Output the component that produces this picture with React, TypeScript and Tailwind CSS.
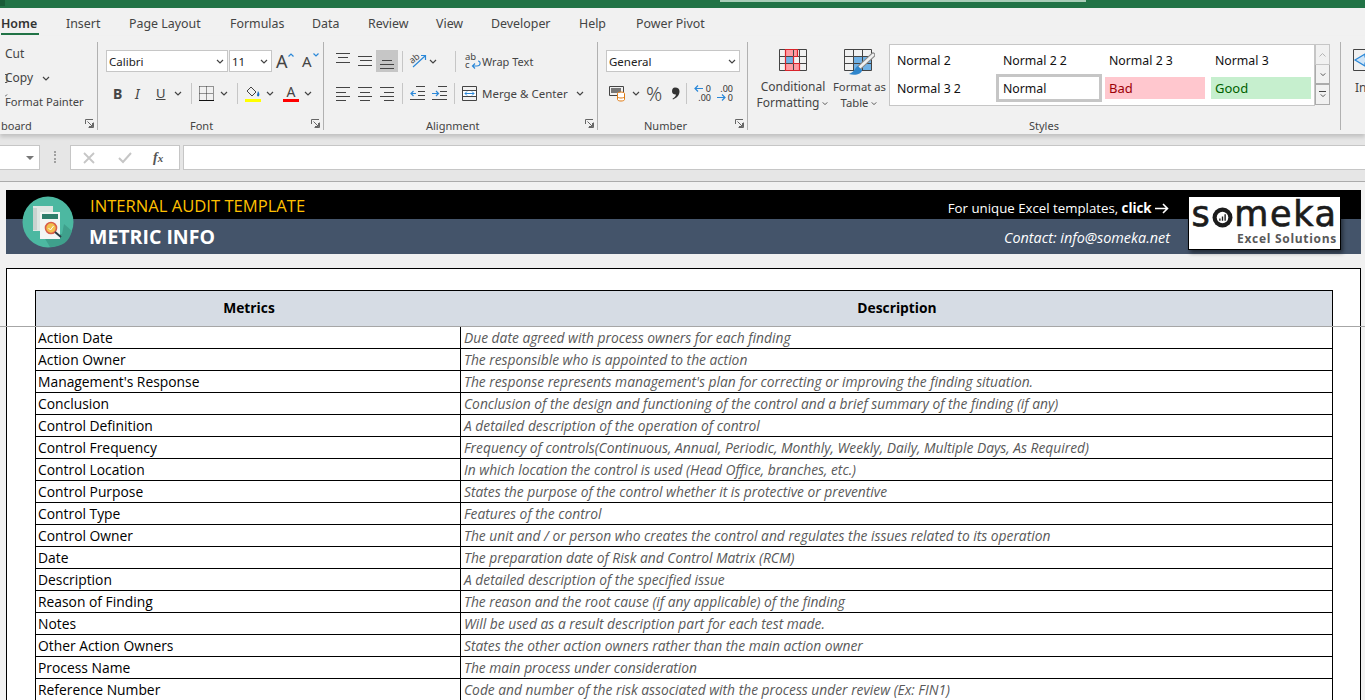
import React from "react";

const Chev = ({ className = "" }: { className?: string }) => (
  <svg width="8" height="5" viewBox="0 0 8 5" className={"shrink-0 " + className}>
    <path d="M1 1l3 3 3-3" fill="none" stroke="#444" strokeWidth="1.2" />
  </svg>
);

const Launcher = () => (
  <svg width="9" height="9" viewBox="0 0 9 9" className="absolute right-[3px] top-0">
    <path d="M.5 5V.5H8M8.5 3.5v5H3.5M2.5 2.5L7.5 7.5M4 7.5h3.5V4" fill="none" stroke="#666" strokeWidth="1" />
  </svg>
);

const Sep = ({ className = "" }: { className?: string }) => <div className={"w-px h-[21px] bg-[#c6c6c6] shrink-0 " + className} />;

const Lines = ({ ys, xs }: { ys: number[]; xs: [number, number][] }) => (
  <svg width="14" height="22" viewBox="0 0 14 22" className="shrink-0">
    {ys.map((y, i) => (
      <rect key={i} x={xs[i][0]} y={y} width={xs[i][1] - xs[i][0]} height="1" fill="#444" />
    ))}
  </svg>
);

const Group = ({ w, label, children, launcher = true, labelClass = "justify-center" }: { w: string; label: string; children: React.ReactNode; launcher?: boolean; labelClass?: string }) => (
  <div className={"relative h-[88px] my-[6px] border-r border-[#b1b1b1] shrink-0 flex flex-col " + w}>
    <div className="h-[77px] shrink-0">{children}</div>
    <div className={"relative flex shrink-0 h-[14px] mt-[0px] text-[11px] leading-[14px] text-[#444] " + labelClass}>
      {label}
      {launcher && <Launcher />}
    </div>
  </div>
);

const Combo = ({ w, text, className = "" }: { w: string; text: string; className?: string }) => (
  <div className={"h-[22px] bg-white border border-[#c6c6c6] flex items-center justify-between pl-[2px] pr-[3px] text-[11.5px] text-[#222] shrink-0 " + w + " " + className}>
    <span className="pt-[2px]">{text}</span>
    <Chev />
  </div>
);

const CFIcon = () => (
  <svg width="29" height="23" viewBox="0 0 29 23">
    <rect x="6" y=".5" width="12" height="7" fill="#ff9aa2" />
    <rect x="6" y="7.5" width="8" height="7" fill="#6fb1e6" />
    <rect x="6" y="14.5" width="14" height="7" fill="#ff9aa2" />
    <path d="M.5.5h27v21H.5zM.5 7.5h27M.5 14.5h27M6.5.5v21M20.5.5v21M14.5 .5v21" fill="none" stroke="#444" />
    <path d="M6.5.5h12v7h-4v7h6v7h-14z" fill="none" stroke="#d9242b" strokeWidth="1.2" />
  </svg>
);

const FTIcon = () => (
  <svg width="31" height="27" viewBox="0 0 31 27">
    <rect x="9" y="7" width="18" height="14" fill="#6fb1e6" />
    <path d="M.5.5h27v21H.5zM.5 7.5h27M.5 14.5h27M9.5.5v21M18.5.5v21" fill="none" stroke="#444" />
    <path d="M29 6L15 19" stroke="#8a8a8a" strokeWidth="5" strokeLinecap="round" />
    <path d="M29 6L15 19" stroke="#f0f0f0" strokeWidth="2.6" strokeLinecap="round" />
    <path d="M14 17c-3 1-3 6-9 8 6 2 13 0 13-4z" fill="#2f86cc" />
  </svg>
);

const StyleCell = ({ children, className = "" }: { children: React.ReactNode; className?: string }) => (
  <div className={"h-[28px] flex items-center text-[12.3px] pt-[2px] shrink-0 " + className}>{children}</div>
);

const rows: [string, string][] = [
  ["Action Date", "Due date agreed with process owners for each finding"],
  ["Action Owner", "The responsible who is appointed to the action"],
  ["Management's Response", "The response represents management's plan for correcting or improving the finding situation."],
  ["Conclusion", "Conclusion of the design and functioning of the control and a brief summary of the finding (if any)"],
  ["Control Definition", "A detailed description of the operation of control"],
  ["Control Frequency", "Frequency of controls(Continuous, Annual, Periodic, Monthly, Weekly, Daily, Multiple Days, As Required)"],
  ["Control Location", "In which location the control is used (Head Office, branches, etc.)"],
  ["Control Purpose", "States the purpose of the control whether it is protective or preventive"],
  ["Control Type", "Features of the control"],
  ["Control Owner", "The unit and / or person who creates the control and regulates the issues related to its operation"],
  ["Date", "The preparation date of Risk and Control Matrix (RCM)"],
  ["Description", "A detailed description of the specified issue"],
  ["Reason of Finding", "The reason and the root cause (if any applicable) of the finding"],
  ["Notes", "Will be used as a result description part for each test made."],
  ["Other Action Owners", "States the other action owners rather than the main action owner"],
  ["Process Name", "The main process under consideration"],
  ["Reference Number", "Code and number of the risk associated with the process under review (Ex: FIN1)"],
];

const tabs: [string, string][] = [
  ["Insert", "w-[63px]"],
  ["Page Layout", "w-[101px]"],
  ["Formulas", "w-[82px]"],
  ["Data", "w-[56px]"],
  ["Review", "w-[68px]"],
  ["View", "w-[55px]"],
  ["Developer", "w-[88px]"],
  ["Help", "w-[57px]"],
  ["Power Pivot", "w-[80px]"],
];

export default function App() {
  return (
    <div className="relative w-[1365px] h-[700px] overflow-hidden bg-[#f1f1f1] font-['Open_Sans'] text-black">
      {/* Title bar */}
      <div className="relative h-[8px] bg-[#217346] flex">
        <div className="w-[5px] h-[6px] bg-[#185c37]" />
        <div className="ml-[715px] w-[366px] h-[2px] bg-[#a9cdb8]" />
      </div>

      {/* Tabs */}
      <div className="h-[28px] flex items-center pt-[4px] text-[12.4px] text-[#444] font-['Noto_Sans']">
        <div className="relative w-[66px] pl-[1px] font-semibold text-[#333]">
          Home
          <div className="absolute left-[1px] top-[18px] w-[38px] h-[2px] bg-[#217346]" />
        </div>
        {tabs.map(([t, w]) => (
          <div key={t} className={"shrink-0 " + w}>{t}</div>
        ))}
      </div>

      {/* Ribbon */}
      <div className="relative z-10 h-[98px] bg-[#f1f1f1] shadow-[0_3px_4px_rgba(0,0,0,0.16)] flex font-['Noto_Sans'] text-[12px] text-[#444]">
        <Group w="w-[98px]" label="board" labelClass="justify-start pl-[1px]">
          <div className="pl-[5px] flex flex-col">
            <div className="h-[24px] flex items-center">Cut</div>
            <div className="relative h-[24px] flex items-center">
              <svg width="3" height="9" viewBox="0 0 3 9" className="absolute left-0 top-[8px]"><path d="M0 .5h2v8H0" fill="none" stroke="#555" /></svg>
              Copy<Chev className="ml-[9px]" />
            </div>
            <div className="relative h-[24px] flex items-center text-[11.2px]">
              <svg width="3" height="5" viewBox="0 0 3 5" className="absolute left-0 top-[3px]"><path d="M0 3.5l2-2" fill="none" stroke="#555" /></svg>
              Format Painter
            </div>
          </div>
        </Group>

        <Group w="w-[226px]" label="Font" labelClass="justify-start pl-[92px]">
          <div className="pl-[8px] pt-[8px]">
            <div className="flex items-center h-[22px]">
              <Combo w="w-[122px]" text="Calibri" />
              <Combo w="w-[43px]" text="11" className="ml-[1px]" />
              <span className="ml-[4px] text-[18px] leading-none w-[12px]">A</span>
              <svg width="6" height="4" viewBox="0 0 6 4" className="-mt-[12px]"><path d="M.5 3.5L3 1l2.5 2.5" fill="none" stroke="#2b88d8" strokeWidth="1.2" /></svg>
              <span className="ml-[8px] text-[15px] leading-none w-[11px]">A</span>
              <svg width="6" height="4" viewBox="0 0 6 4" className="-mt-[12px]"><path d="M.5.5L3 3 5.5.5" fill="none" stroke="#2b88d8" strokeWidth="1.2" /></svg>
            </div>
            <div className="flex items-center h-[23px] mt-[10px]">
              <span className="ml-[7px] w-[9px] font-bold text-[14px]">B</span>
              <span className="ml-[13px] w-[6px] italic text-[14px]">I</span>
              <span className="ml-[15px] w-[9px] underline text-[13px]">U</span>
              <Chev className="ml-[9px]" />
              <Sep className="ml-[9px]" />
              <svg width="15" height="15" viewBox="0 0 15 15" className="ml-[7px]">
                <path d="M.5.5h14M.5 7.5h14M.5.5v13M7.5.5v13M14.5.5v13" fill="none" stroke="#333" strokeDasharray="1 1" />
                <path d="M0 14.5h15" stroke="#111" />
              </svg>
              <Chev className="ml-[6px]" />
              <Sep className="ml-[9px]" />
              <div className="ml-[7px] w-[16px] flex flex-col items-center">
                <svg width="15" height="12" viewBox="0 0 15 12">
                  <path d="M5 1l5 5-4 4-5-5z" fill="none" stroke="#444" />
                  <path d="M12 5c1 2 2 3 1 5-1 1-2 0-2-1z" fill="#1b6ec2" />
                </svg>
                <div className="w-[16px] h-[3px] bg-[#ffff00] mt-[1px]" />
              </div>
              <Chev className="ml-[5px]" />
              <div className="ml-[9px] w-[16px] flex flex-col items-center">
                <span className="text-[14px] leading-[12px] h-[12px]">A</span>
                <div className="w-[16px] h-[3px] bg-[#ff0000] mt-[1px]" />
              </div>
              <Chev className="ml-[5px]" />
            </div>
          </div>
        </Group>

        <Group w="w-[274px]" label="Alignment" labelClass="justify-start pl-[102px]">
          <div className="pl-[12px] pt-[8px]">
            <div className="flex items-center h-[22px]">
              <Lines ys={[3, 7, 12]} xs={[[0, 14], [2, 12], [0, 14]]} />
              <div className="ml-[8px]"><Lines ys={[6, 10, 15]} xs={[[0, 14], [2, 14], [0, 14]]} /></div>
              <div className="ml-[4px] w-[22px] h-[22px] bg-[#c6c6c6] flex justify-center">
                <Lines ys={[10, 14, 18]} xs={[[2, 12], [0, 14], [0, 14]]} />
              </div>
              <Sep className="ml-[4px]" />
              <svg width="17" height="16" viewBox="0 0 17 16" className="ml-[7px] overflow-visible">
                <path d="M3 14L15 3M11 2.500h4.500V7" fill="none" stroke="#2b88d8" strokeWidth="1.2" />
                <text x="0" y="9" fontSize="9" fill="#444" transform="rotate(-38 4 7)" fontFamily="Noto Sans">ab</text>
              </svg>
              <Chev className="ml-[2px]" />
              <Sep className="ml-[18px]" />
              <svg width="16" height="17" viewBox="0 0 16 17" className="ml-[9px] overflow-visible">
                <text x="0" y="7" fontSize="9.500" fill="#444" fontFamily="Noto Sans">ab</text>
                <text x="0" y="15" fontSize="9.500" fill="#444" fontFamily="Noto Sans">c</text>
                <path d="M13 8c3 0 3 5-1 5H7.500M10 10.500L7.500 13l2.500 2.500" fill="none" stroke="#2b88d8" strokeWidth="1.2" />
              </svg>
              <span className="ml-[1px] pt-[2px] text-[11px]">Wrap Text</span>
            </div>
            <div className="flex items-center h-[23px] mt-[10px]">
              <Lines ys={[4, 9, 13, 17]} xs={[[0, 14], [0, 10], [0, 14], [0, 10]]} />
              <div className="ml-[8px]"><Lines ys={[4, 9, 13, 17]} xs={[[0, 14], [2, 12], [0, 14], [2, 12]]} /></div>
              <div className="ml-[8px]"><Lines ys={[4, 9, 13, 17]} xs={[[0, 14], [4, 14], [0, 14], [4, 14]]} /></div>
              <Sep className="ml-[8px]" />
              <svg width="15" height="15" viewBox="0 0 15 15" className="ml-[7px]">
                <path d="M6 .5h9M8 5.500h7M8 9.500h7M0 13.500h15" stroke="#444" fill="none" />
                <path d="M6 7.500H1M3.500 5L1 7.500 3.500 10" fill="none" stroke="#2b88d8" strokeWidth="1.2" />
              </svg>
              <svg width="15" height="15" viewBox="0 0 15 15" className="ml-[7px]">
                <path d="M6 .5h9M8 5.500h7M8 9.500h7M0 13.500h15" stroke="#444" fill="none" />
                <path d="M0 7.500h6M4 5l2.500 2.500L4 10" fill="none" stroke="#2b88d8" strokeWidth="1.2" />
              </svg>
              <Sep className="ml-[7px]" />
              <svg width="15" height="15" viewBox="0 0 15 15" className="ml-[7px]">
                <path d="M.5.5h14v14H.5zM.5 4.500h14M.5 10.500h14" fill="none" stroke="#444" />
                <rect x="1" y="5" width="13" height="5" fill="#fff" />
                <path d="M3 7.500h9M5 5.500l-2 2 2 2M10 5.500l2 2-2 2" fill="none" stroke="#2b88d8" />
              </svg>
              <span className="ml-[5px] text-[11.5px]">Merge &amp; Center</span>
              <Chev className="ml-[8px]" />
            </div>
          </div>
        </Group>

        <Group w="w-[150px]" label="Number" labelClass="justify-start pl-[46px]">
          <div className="pl-[8px] pt-[8px]">
            <Combo w="w-[134px]" text="General" />
            <div className="flex items-center h-[23px] mt-[10px]">
              <svg width="18" height="17" viewBox="0 0 18 17" className="ml-[3px]">
                <path d="M.5 1.500h14v9H.5z" fill="none" stroke="#444" />
                <rect x="2" y="3" width="10" height="5" fill="#777" />
                <ellipse cx="12" cy="8.500" rx="3.500" ry="1.500" fill="#fff" stroke="#e07a12" />
                <path d="M8.500 8.500v6c0 2 7 2 7 0v-6M8.500 11.500c0 2 7 2 7 0" fill="#fff" stroke="#e07a12" />
              </svg>
              <Chev className="ml-[5px]" />
              <span className="ml-[6px] w-[20px] text-[20px] font-light leading-none">%</span>
              <svg width="9" height="13" viewBox="0 0 9 13" className="ml-[5px]">
                <path d="M4 .5c3 0 4.500 1.500 4.500 4C8.500 8 6 11 2 12.500l-.5-.8C3.500 10.500 5 9 5 7.500 3 7.800 1 6.500 1 4.200 1 2 2.200.5 4 .5z" fill="#333" />
              </svg>
              <Sep className="ml-[6px]" />
              <div className="relative ml-[7px] w-[17px] h-[20px] text-[9px] leading-[9px] text-right text-[#333]">
                <div>0</div>
                <div>.00</div>
                <svg width="9" height="9" viewBox="0 0 9 9" className="absolute left-0 top-0"><path d="M9 4.500H1M4 1.500l-3 3 3 3" fill="none" stroke="#2b88d8" strokeWidth="1.2" /></svg>
              </div>
              <div className="relative ml-[6px] w-[16px] h-[20px] text-[9px] leading-[9px] text-right text-[#333]">
                <div>.00</div>
                <div>0</div>
                <svg width="10" height="9" viewBox="0 0 10 9" className="absolute left-0 top-[9px]"><path d="M0 4.500h8M5 1.500l3 3-3 3" fill="none" stroke="#2b88d8" strokeWidth="1.2" /></svg>
              </div>
            </div>
          </div>
        </Group>

        <Group w="w-[593px]" label="Styles" labelClass="justify-start pl-[281px]" launcher={false}>
          <div className="flex">
            <div className="ml-[10px] w-[70px] flex flex-col items-center pt-[7px]">
              <CFIcon />
              <div className="mt-[7px] leading-[16px] text-center whitespace-nowrap">Conditional</div>
              <div className="leading-[16px] flex items-center whitespace-nowrap">Formatting<Chev className="ml-[2px] scale-75" /></div>
            </div>
            <div className="ml-[1px] w-[61px] flex flex-col items-center pt-[7px] text-[11.3px]">
              <div className="h-[23px] self-start ml-[15px]"><FTIcon /></div>
              <div className="mt-[7px] leading-[16px] whitespace-nowrap">Format as</div>
              <div className="leading-[16px] flex items-center">Table<Chev className="ml-[2px] scale-75" /></div>
            </div>
            <div className="mt-[2px] ml-[-1px] w-[426px] h-[62px] bg-white border border-[#c6c6c6] pt-[1px] text-[#111]">
              <div className="flex h-[28px]">
                <StyleCell className="w-[106px] pl-[7px]">Normal 2</StyleCell>
                <StyleCell className="w-[106px] pl-[7px]">Normal 2 2</StyleCell>
                <StyleCell className="w-[106px] pl-[7px]">Normal 2 3</StyleCell>
                <StyleCell className="w-[100px] pl-[7px]">Normal 3</StyleCell>
              </div>
              <div className="flex h-[28px]">
                <StyleCell className="w-[106px] pl-[7px]">Normal 3 2</StyleCell>
                <StyleCell className="w-[106px] border-[3px] border-[#c6c6c6] pl-[4px]">Normal</StyleCell>
                <div className="w-[100px] h-[22px] mt-[3px] ml-[3px] pl-[4px] pt-[2px] bg-[#ffc7ce] text-[#9c0006] text-[13px] flex items-center">Bad</div>
                <div className="w-[100px] h-[22px] mt-[3px] ml-[6px] pl-[4px] pt-[2px] bg-[#c6efce] text-[#006100] text-[13px] flex items-center">Good</div>
              </div>
            </div>
            <div className="mt-[2px] w-[15px] flex flex-col">
              <div className="h-[21px] border border-[#c6c6c6] flex items-center justify-center"><svg width="7" height="4" viewBox="0 0 7 4"><path d="M.5 3.500l3-3 3 3" fill="none" stroke="#b5b5b5" /></svg></div>
              <div className="h-[19px] border border-[#ababab] border-t-0 flex items-center justify-center"><Chev className="scale-75" /></div>
              <div className="h-[21px] border border-[#ababab] flex flex-col items-center justify-center"><div className="w-[7px] h-px bg-[#444] mb-[1px]" /><Chev className="scale-75" /></div>
            </div>
          </div>
        </Group>

        <div className="ml-[12px] w-[24px] mt-[13px]">
          <svg width="24" height="22" viewBox="0 0 24 22">
            <path d="M.5.500h24v21H.5z" fill="none" stroke="#444" />
            <path d="M12 5l-10 6 10 6v-3h12V8H12z" fill="#cfe4f6" stroke="#2b88d8" strokeWidth="1.2" />
          </svg>
          <div className="mt-[8px] ml-[2px] whitespace-nowrap">In</div>
        </div>
      </div>

      {/* Formula bar */}
      <div className="h-[48px] bg-[#e6e6e6] border-b border-[#ababab] pt-[11px] flex items-start">
        <div className="w-[40px] h-[25px] bg-white border-y border-r border-[#c6c6c6] flex items-center justify-end pr-[5px]">
          <svg width="8" height="4" viewBox="0 0 8 4"><path d="M0 0h8L4 4z" fill="#777" /></svg>
        </div>
        <div className="ml-[14px] w-[2px] h-[12px] mt-[6px] border-l-2 border-dotted border-[#a0a0a0]" />
        <div className="ml-[14px] w-[110px] h-[25px] bg-white border border-[#c6c6c6] flex items-center pl-[12px]">
          <svg width="12" height="12" viewBox="0 0 12 12"><path d="M1 1l10 10M11 1L1 11" stroke="#c6c6c6" strokeWidth="1.8" /></svg>
          <svg width="14" height="12" viewBox="0 0 14 12" className="ml-[23px]"><path d="M1 6l4 4 8-9" fill="none" stroke="#c6c6c6" strokeWidth="2" /></svg>
          <span className="ml-[21px] italic font-bold font-['Liberation_Serif'] text-[14px] text-[#555]">f<span className="text-[11px]">x</span></span>
        </div>
        <div className="ml-[3px] flex-1 h-[25px] bg-white border-y border-l border-[#c6c6c6]" />
      </div>

      {/* Sheet */}
      <div className="pt-[8px] pl-[6px] pr-[4px]">
        <div className="relative">
          <div className="h-[29px] bg-black flex items-center justify-between pl-[84px] pr-[192px]">
            <span className="mt-[4px] text-[#ffc000] text-[16.6px] leading-none">INTERNAL AUDIT TEMPLATE</span>
            <span className="mt-[8px] text-white text-[13.25px] leading-none flex items-center">For unique Excel templates,&nbsp;<b>click</b>&nbsp;<svg width="14" height="11" viewBox="0 0 14 11"><path d="M0 5.500h12M8 1l4.500 4.500L8 10" fill="none" stroke="#fff" strokeWidth="1.6" /></svg></span>
          </div>
          <div className="h-[35px] bg-[#44546a] flex items-center justify-between pl-[83px] pr-[191px]">
            <span className="text-white text-[19.5px] font-bold leading-none">METRIC INFO</span>
            <span className="mt-[4px] text-white italic text-[14.4px] leading-none">Contact: info@someka.net</span>
          </div>

          {/* Round badge */}
          <svg width="52" height="52" viewBox="0 0 52 52" className="absolute left-[16px] top-[6px]">
            <circle cx="26" cy="26" r="25.500" fill="#4cb8a1" />
            <path d="M40 38L22 41l6 10c12 0 19-5 22-16l-8-7z" fill="#3fa08c" />
            <rect x="11" y="10" width="20" height="25" fill="#dfe6e3" />
            <rect x="11" y="12" width="4" height="22" fill="#c9d2cf" />
            <rect x="18" y="16" width="20" height="27" fill="#f3f5f4" />
            <rect x="20" y="18" width="16" height="5" fill="#2e7d6b" />
            <circle cx="29" cy="32" r="5.500" fill="#f2c14e" stroke="#d9604a" strokeWidth="1.600" />
            <path d="M26.500 32l2 2 3-4" fill="none" stroke="#fff" strokeWidth="1" />
            <path d="M33 36l6 5" stroke="#2b3a42" strokeWidth="2" />
          </svg>

          {/* Logo */}
          <div className="absolute left-[1182px] top-[6px] w-[153px] h-[54px] bg-white border border-black shadow-[2px_3px_4px_rgba(0,0,0,0.45)] flex flex-col items-center">
            <div className="h-[35px] flex items-center text-[35px] leading-none tracking-[1.6px] text-[#1c1c1c] [-webkit-text-stroke:0.7px_#1c1c1c] font-['DejaVu_Sans']">
              s
              <svg width="21" height="21" viewBox="0 0 20 20" className="mt-[6px] mx-[1px]">
                <circle cx="10" cy="10" r="9.500" fill="#1c1c1c" />
                <circle cx="10" cy="10" r="5.500" fill="#fff" />
                <path d="M7.500 13v-2M10 13V9M12.500 13V7" stroke="#1c1c1c" strokeWidth="1.300" />
              </svg>
              meka
            </div>
            <div className="self-end mr-[3px] text-[12px] leading-[14px] font-bold tracking-[0.7px] text-[#595959]">Excel Solutions</div>
          </div>
        </div>

        <div className="mt-[14px] bg-white border border-black pl-[28px] pr-[27px] pt-[21px] h-[500px]">
          <div className="border-t border-l border-r border-black bg-[#d6dce4] grid grid-cols-[426px_1fr] h-[37px] pb-[1px] items-center text-[13.8px] font-bold">
            <div className="text-center">Metrics</div>
            <div className="text-center">Description</div>
          </div>
          <div className="border-t border-l border-r border-black -mt-px">
            {rows.map(([m, d]) => (
              <div key={m} className="grid grid-cols-[425px_1fr] h-[22px] border-b border-black text-[13.85px] leading-[21px]">
                <div className="pl-[2px] border-r border-black whitespace-nowrap">{m}</div>
                <div className="pl-[3px] italic text-[13.8px] text-[#595959] whitespace-nowrap">{d}</div>
              </div>
            ))}
          </div>
        </div>
      </div>

      {/* Freeze pane line */}
      <div className="absolute left-0 right-0 top-[326px] h-px bg-[#a6a6a6]" />
    </div>
  );
}
